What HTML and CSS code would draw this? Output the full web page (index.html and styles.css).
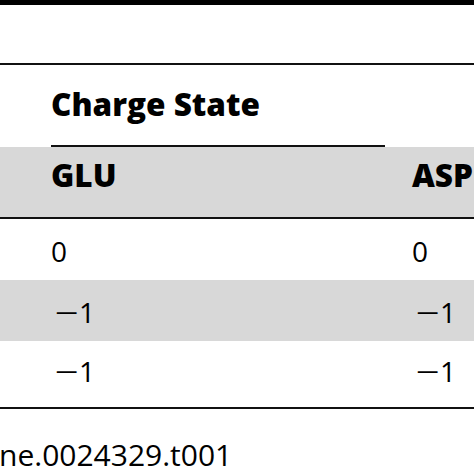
FILE: index.html
```html
<!DOCTYPE html>
<html lang="en">
<head>
<meta charset="utf-8">
<title>Table</title>
<link rel="stylesheet" href="styles.css">
</head>
<body>
<div class="page">
  <div class="topbar"></div>
  <div class="blank"></div>
  <div class="rule"></div>
  <div class="head-group">
    <div class="group-title">Charge State</div>
  </div>
  <div class="row head shaded">
    <div class="cell">GLU</div>
    <div class="cell">ASP</div>
  </div>
  <div class="rule"></div>
  <div class="row body r1">
    <div class="cell">0</div>
    <div class="cell">0</div>
  </div>
  <div class="row body r2 shaded">
    <div class="cell neg"><span class="minus">&minus;</span>1</div>
    <div class="cell neg"><span class="minus">&minus;</span>1</div>
  </div>
  <div class="row body r3">
    <div class="cell neg"><span class="minus">&minus;</span>1</div>
    <div class="cell neg"><span class="minus">&minus;</span>1</div>
  </div>
  <div class="rule"></div>
  <div class="caption">ne.0024329.t001</div>
</div>
</body>
</html>
```

FILE: styles.css
```css
html, body {
  margin: 0;
  padding: 0;
  background: #ffffff;
}
.page {
  width: 474px;
  height: 474px;
  overflow: hidden;
  font-family: "Open Sans", "Noto Sans", sans-serif;
  color: #000;
}
.topbar {
  height: 5px;
  background: #000;
}
.blank {
  height: 58px;
}
.rule {
  height: 2px;
  background: #111;
}
.head-group {
  padding-left: 51px;
}
.group-title {
  width: 334px;
  height: 57px;
  padding-top: 23px;
  border-bottom: 2px solid #111;
  font-weight: 800;
  font-size: 31.5px;
  line-height: 32px;
  white-space: nowrap;
}
.row {
  display: grid;
  grid-template-columns: 361px auto;
  padding-left: 51px;
  white-space: nowrap;
}
.shaded {
  background: #d8d8d8;
}
.head {
  height: 58px;
  padding-top: 12px;
  font-weight: 800;
  font-size: 31.5px;
  line-height: 32px;
}
.body {
  font-size: 28px;
  line-height: 28px;
}
.neg {
  padding-left: 4px;
}
.minus {
  display: inline-block;
  transform: scaleX(1.5);
  transform-origin: 0 50%;
  margin-right: 8px;
}
.r1 { height: 43px; padding-top: 18px; }
.r2 { height: 43px; padding-top: 18px; }
.r3 { height: 50px; padding-top: 16px; }
.caption {
  margin-left: -1px;
  padding-top: 31px;
  font-size: 30px;
  line-height: 30px;
  white-space: nowrap;
}
```
